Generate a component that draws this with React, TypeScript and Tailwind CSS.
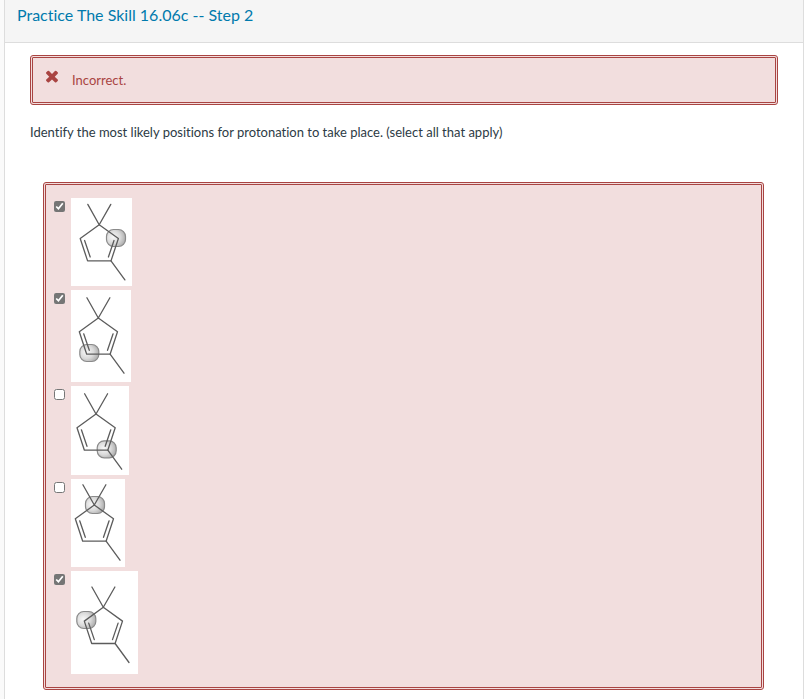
import React, { useState } from 'react'

type Point = [number, number]

interface Option {
  id: string
  label: string
  width: number
  height: number
  apex: Point
  highlight: Point
  checked: boolean
}

const OPTIONS: Option[] = [
  { id: 'pos-1', label: 'Right ring carbon', width: 61, height: 88, apex: [28.2, 26.7], highlight: [45, 40], checked: true },
  { id: 'pos-2', label: 'Lower left ring carbon', width: 60, height: 92, apex: [27.3, 28], highlight: [18.3, 63], checked: true },
  { id: 'pos-3', label: 'Lower right ring carbon', width: 58, height: 89, apex: [25, 28], highlight: [35.7, 63.3], checked: false },
  { id: 'pos-4', label: 'Top ring carbon', width: 54, height: 88, apex: [23.3, 26], highlight: [24, 26], checked: false },
  { id: 'pos-5', label: 'Left ring carbon', width: 67, height: 103, apex: [32.3, 36.3], highlight: [15.3, 49], checked: true },
]

// Trimethylcyclopentadiene skeleton, drawn relative to the quaternary carbon
function Molecule({ option }: { option: Option }) {
  const { id, label, width, height, apex, highlight } = option
  const gradientId = `${id}-sphere`

  return (
    <svg width={width} height={height} viewBox={`0 0 ${width} ${height}`} role="img" aria-label={label} className="shrink-0 bg-white">
      <defs>
        <radialGradient id={gradientId} cx="0.35" cy="0.45" r="0.75">
          <stop offset="0" stopColor="#f8f8f8" />
          <stop offset="0.5" stopColor="#dadada" />
          <stop offset="1" stopColor="#a0a0a0" />
        </radialGradient>
      </defs>
      <rect
        x={highlight[0] - 9.5}
        y={highlight[1] - 8.5}
        width="19"
        height="17"
        rx="7"
        fill={`url(#${gradientId})`}
        stroke="#8a8a8a"
        strokeWidth="1.2"
      />
      <g transform={`translate(${apex[0]} ${apex[1]})`} fill="none" stroke="#5c5c5c" strokeWidth="1.3" strokeLinecap="round" strokeLinejoin="round">
        <path d="M-11.4 -20.3L0 0L11.6 -20.3" />
        <path d="M0 0L-19 13.8L-11.6 36.2H11.8L19.2 13.8Z" />
        <path d="M-14.6 15.8L-9 32.3M14.8 15.8L9.2 32.3" />
        <path d="M11.8 36.2L25.7 55.2" />
      </g>
    </svg>
  )
}

function CrossIcon() {
  return (
    <svg width="18" height="18" viewBox="0 0 1792 1792" fill="currentColor" aria-hidden="true" className="shrink-0">
      <path d="M1490 1322q0 40-28 68l-136 136q-28 28-68 28t-68-28l-294-294-294 294q-28 28-68 28t-68-28l-136-136q-28-28-28-68t28-68l294-294-294-294q-28-28-28-68t28-68l136-136q28-28 68-28t68 28l294 294 294-294q28-28 68-28t68 28l136 136q28 28 28 68t-28 68l-294 294 294 294q28 28 28 68z" />
    </svg>
  )
}

export default function App() {
  const [selected, setSelected] = useState<string[]>(OPTIONS.filter((o) => o.checked).map((o) => o.id))

  const toggle = (id: string) => {
    setSelected((prev) => (prev.includes(id) ? prev.filter((s) => s !== id) : [...prev, id]))
  }

  return (
    <div className="min-h-screen bg-[#fafafa] pl-1 font-['Lato',sans-serif] text-[#2d3b45] [font-variant-ligatures:none]">
      <main className="min-h-screen border-x border-[#dddddd] bg-white">
        <header className="border-b border-[#dddddd] bg-[#f5f5f5] px-3 pt-1 pb-4">
          <h1 className="text-base leading-[22px] text-[#007aad]">Practice The Skill 16.06c -- Step 2</h1>
        </header>

        <div className="px-[25px] pt-3 pb-2">
          <div role="alert" className="flex items-start gap-[11px] rounded-[3px] border-3 border-double border-[#a94442] bg-[#f2dede] px-[10px] py-[9px] text-[#a94442]">
            <CrossIcon />
            <span className="text-[13px] leading-[26px]">Incorrect.</span>
          </div>

          <fieldset className="mt-[18px]">
            <legend className="text-[13px] leading-[18px]">
              Identify the most likely positions for protonation to take place. (select all that apply)
            </legend>
            <div className="mr-[14px] ml-[13px] mt-[41px] flex flex-col gap-1 rounded-[3px] border-3 border-double border-[#a94442] bg-[#f2dede] px-2 py-[13px]">
              {OPTIONS.map((option) => (
                <label key={option.id} className="flex items-start gap-[6px]">
                  <input
                    type="checkbox"
                    checked={selected.includes(option.id)}
                    onChange={() => toggle(option.id)}
                    className="mt-[3px] size-[11px] shrink-0 accent-[#757575]"
                  />
                  <Molecule option={option} />
                </label>
              ))}
            </div>
          </fieldset>
        </div>
      </main>
    </div>
  )
}
